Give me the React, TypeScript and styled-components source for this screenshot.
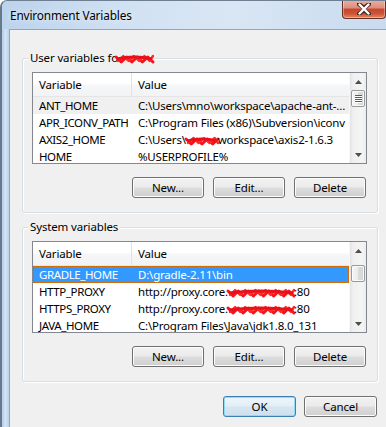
import React from "react";
import styled, { createGlobalStyle, css } from "styled-components";

const GlobalStyle = createGlobalStyle`
  html, body { margin: 0; padding: 0; background: #fff; }
  body {
    font-family: "Noto Sans", "Open Sans", sans-serif;
    font-size: 11.5px;
    letter-spacing: -0.15px;
    color: #000;
  }
  * { box-sizing: border-box; }
`;

const Window = styled.div`
  width: 386px;
  height: 427px;
  display: flex;
  flex-direction: column;
  overflow: hidden;
  border-top: 1px solid #6f7f92;
  border-left: 2px solid #68778a;
  border-top-left-radius: 7px;
  background: linear-gradient(180deg, #cfe0f3 0%, #bfd5ee 40%, #b4cce8 100%);
`;

const TitleBar = styled.div`
  height: 28px;
  display: flex;
  align-items: center;
  padding-left: 8px;
  background: linear-gradient(90deg, #bcd3ec 0%, #d2e2f3 35%, #d9e6f4 60%, #c8dbef 100%);
`;

const Title = styled.span`
  font-size: 11.8px;
  color: #000;
  text-shadow: 0 0 6px rgba(255, 255, 255, 0.9);
`;

const CloseButton = styled.div`
  margin-left: auto;
  align-self: flex-start;
  margin-top: -1px;
  width: 44px;
  height: 19px;
  display: flex;
  align-items: center;
  justify-content: center;
  border: 1px solid #6a2e25;
  border-top: none;
  border-radius: 0 0 4px 4px;
  background: linear-gradient(180deg, #eab0a3 0%, #dc8d7b 45%, #c5472d 50%, #cc5236 75%, #e0895f 100%);
  box-shadow: inset 0 0 0 1px rgba(255, 255, 255, 0.35);
`;

const Body = styled.div`
  flex: 1;
  display: flex;
`;

const SideFrame = styled.div`
  width: 7px;
  background: linear-gradient(90deg, #b3cbe7 0%, #d3e3f4 50%, #bad0ea 100%);
`;

const Client = styled.div`
  flex: 1;
  display: flex;
  flex-direction: column;
  background: #f0f0f0;
  border-top: 1px solid #93a5ba;
  border-left: 1px solid #93a5ba;
  padding-top: 28px;
`;

const Group = styled.div<{ $gap?: number }>`
  position: relative;
  width: 356px;
  margin-left: 12px;
  margin-top: ${(p) => p.$gap ?? 0}px;
  border: 1px solid #d5dfe5;
  border-radius: 3px;
  padding: 13px 10px 14px 9px;
  box-shadow: inset 1px 1px 0 #fff, 1px 1px 0 #fff;
`;

const Legend = styled.span`
  position: absolute;
  top: -9px;
  left: 5px;
  padding: 0 2px;
  line-height: 15px;
  background: #f0f0f0;
  white-space: nowrap;
`;

const List = styled.div`
  height: 92px;
  display: flex;
  border: 1px solid #828790;
  background: #fff;
  overflow: hidden;
`;

const ListBody = styled.div`
  flex: 1;
  min-width: 0;
  display: flex;
  flex-direction: column;
`;

const HeaderRow = styled.div`
  display: grid;
  grid-template-columns: 99px 1fr;
  height: 24px;
  flex-shrink: 0;
  border-bottom: 1px solid #e5e5e5;
  background: linear-gradient(180deg, #ffffff 0%, #ffffff 45%, #f5f6f7 55%, #f2f3f5 100%);
`;

const HeaderCell = styled.div`
  display: flex;
  align-items: center;
  padding-left: 6px;
  &:first-child { border-right: 1px solid #dfe3e8; }
`;

const Row = styled.div<{ $sel?: "active" | "inactive" }>`
  display: grid;
  grid-template-columns: 99px 1fr;
  height: 17px;
  line-height: 17px;
  flex-shrink: 0;
  ${(p) =>
    p.$sel === "inactive" &&
    css`
      background: #f0f0f0;
    `}
  ${(p) =>
    p.$sel === "active" &&
    css`
      background: #3399ff;
      color: #fff;
      outline: 1px dotted #cc6600;
      outline-offset: -1px;
    `}
`;

const Cell = styled.div<{ $name?: boolean }>`
  padding-left: 6px;
  padding-right: 3px;
  white-space: nowrap;
  overflow: hidden;
  text-overflow: ${(p) => (p.$name ? "clip" : "ellipsis")};
  letter-spacing: ${(p) => (p.$name ? "-0.4px" : "-0.2px")};
`;

const ScrollBar = styled.div`
  width: 17px;
  display: flex;
  flex-direction: column;
  background: linear-gradient(90deg, #e3e3e3 0%, #f0f0f0 20%, #f4f4f4 80%, #ebebeb 100%);
  border-left: 1px solid #f7f7f7;
`;

const ArrowBox = styled.div`
  height: 17px;
  display: flex;
  align-items: center;
  justify-content: center;
  flex-shrink: 0;
`;

const Track = styled.div`
  flex: 1;
`;

const Thumb = styled.div<{ $grip?: boolean }>`
  height: 17px;
  margin: 0 1px;
  border: 1px solid #9a9a9a;
  border-radius: 2px;
  background: linear-gradient(90deg, #f5f5f5 0%, #ececec 50%, #dcdcdc 51%, #d4d4d4 100%);
  box-shadow: inset 0 0 0 1px #fafafa;
  display: flex;
  flex-direction: column;
  align-items: center;
  justify-content: center;
  gap: 1px;
  & > i {
    display: ${(p) => (p.$grip ? "block" : "none")};
    width: 7px;
    height: 1px;
    background: #5d5d5d;
    box-shadow: 0 1px 0 #fff;
  }
`;

const ButtonRow = styled.div`
  display: flex;
  justify-content: flex-end;
  gap: 9px;
  margin-top: 13px;
  padding-right: 1px;
`;

const Button = styled.button<{ $w?: number; $default?: boolean }>`
  width: ${(p) => p.$w ?? 72}px;
  height: 21px;
  padding: 0;
  font-family: inherit;
  font-size: 11.5px;
  letter-spacing: -0.15px;
  color: #000;
  border: 1px solid #707070;
  border-radius: 3px;
  background: linear-gradient(180deg, #f2f2f2 0%, #ebebeb 48%, #dddddd 52%, #cfcfcf 100%);
  box-shadow: inset 0 0 0 1px #fcfcfc;
  ${(p) =>
    p.$default &&
    css`
      border-color: #3c7fb1;
      background: linear-gradient(180deg, #eef6fb 0%, #e3eef7 48%, #d6e6f2 52%, #cfe0ee 100%);
      box-shadow: inset 0 0 0 1px #8fdcf7;
    `}
`;

const Footer = styled.div`
  display: flex;
  justify-content: flex-end;
  gap: 8px;
  margin-top: 14px;
  padding-right: 9px;
`;

const ScribbleSvg = styled.svg`
  display: inline-block;
  vertical-align: middle;
  overflow: visible;
`;

const Scribble = ({ w, ml = 0 }: { w: number; ml?: number }) => {
  const n = Math.max(4, Math.round(w / 5));
  let d = "";
  for (let i = 0; i <= n; i++) {
    const x = (i * w) / n;
    const y = i % 2 === 0 ? 4 : 9;
    d += (i === 0 ? "M" : "L") + x.toFixed(1) + " " + y + " ";
  }
  let d2 = "";
  for (let i = 0; i <= n; i++) {
    const x = (i * w) / n + 2;
    const y = i % 2 === 0 ? 8 : 3;
    d2 += (i === 0 ? "M" : "L") + Math.min(x, w).toFixed(1) + " " + y + " ";
  }
  return (
    <ScribbleSvg width={w} height={12} viewBox={`0 0 ${w} 12`} style={{ marginLeft: ml }}>
      <path d={d} fill="none" stroke="#f4141a" strokeWidth={3} strokeLinejoin="round" strokeLinecap="round" />
      <path d={d2} fill="none" stroke="#ff2a2a" strokeWidth={2.4} strokeLinejoin="round" strokeLinecap="round" />
      <path d={`M1 6 Q ${w / 2} 2 ${w - 1} 6`} fill="none" stroke="#e8101a" strokeWidth={3} />
    </ScribbleSvg>
  );
};

const Arrow = ({ up }: { up?: boolean }) => (
  <svg width="7" height="4" viewBox="0 0 7 4">
    <path d={up ? "M0 4 L3.5 0 L7 4 Z" : "M0 0 L3.5 4 L7 0 Z"} fill="#4d4d4d" />
  </svg>
);

type Item = { name: string; value: React.ReactNode; sel?: "active" | "inactive" };

const VarList = ({ items, thumbOffset, grip }: { items: Item[]; thumbOffset: number; grip?: boolean }) => (
  <List>
    <ListBody>
      <HeaderRow>
        <HeaderCell>Variable</HeaderCell>
        <HeaderCell>Value</HeaderCell>
      </HeaderRow>
      {items.map((it) => (
        <Row key={it.name} $sel={it.sel}>
          <Cell $name>{it.name}</Cell>
          <Cell>{it.value}</Cell>
        </Row>
      ))}
    </ListBody>
    <ScrollBar>
      <ArrowBox>
        <Arrow up />
      </ArrowBox>
      <Track>
        <Thumb $grip={grip} style={{ marginTop: thumbOffset }}>
          <i />
          <i />
          <i />
          <i />
        </Thumb>
      </Track>
      <ArrowBox>
        <Arrow />
      </ArrowBox>
    </ScrollBar>
  </List>
);

const userVars: Item[] = [
  { name: "ANT_HOME", value: "C:\\Users\\mno\\workspace\\apache-ant-1.9.4", sel: "inactive" },
  { name: "APR_ICONV_PATH", value: "C:\\Program Files (x86)\\Subversion\\iconv" },
  {
    name: "AXIS2_HOME",
    value: (
      <>
        C:\Users\
        <Scribble w={32} />
        workspace\axis2-1.6.3
      </>
    ),
  },
  { name: "HOME", value: "%USERPROFILE%" },
];

const sysVars: Item[] = [
  { name: "GRADLE_HOME", value: "D:\\gradle-2.11\\bin", sel: "active" },
  {
    name: "HTTP_PROXY",
    value: (
      <>
        http://proxy.core.
        <Scribble w={66} />
        :80
      </>
    ),
  },
  {
    name: "HTTPS_PROXY",
    value: (
      <>
        http://proxy.core.
        <Scribble w={66} />
        :80
      </>
    ),
  },
  { name: "JAVA_HOME", value: "C:\\Program Files\\Java\\jdk1.8.0_131" },
];

export default function App() {
  return (
    <>
      <GlobalStyle />
      <Window>
        <TitleBar>
          <Title>Environment Variables</Title>
          <CloseButton>
            <svg width="14" height="12" viewBox="0 0 14 12">
              <path
                d="M2 1 L7 5 L12 1 M2 11 L7 7 L12 11"
                fill="none"
                stroke="#4a2a26"
                strokeWidth="4.2"
                strokeLinecap="round"
              />
              <path d="M2.5 1.5 L11.5 10.5 M11.5 1.5 L2.5 10.5" stroke="#fff" strokeWidth="2.4" strokeLinecap="round" />
            </svg>
          </CloseButton>
        </TitleBar>
        <Body>
          <SideFrame />
          <Client>
            <Group>
              <Legend>
                User variables fo
                <Scribble w={37} ml={-2} />
              </Legend>
              <VarList items={userVars} thumbOffset={0} grip />
              <ButtonRow>
                <Button>New...</Button>
                <Button>Edit...</Button>
                <Button>Delete</Button>
              </ButtonRow>
            </Group>
            <Group $gap={14}>
              <Legend>System variables</Legend>
              <VarList items={sysVars} thumbOffset={6} />
              <ButtonRow>
                <Button>New...</Button>
                <Button>Edit...</Button>
                <Button>Delete</Button>
              </ButtonRow>
            </Group>
            <Footer>
              <Button $w={73} $default>
                OK
              </Button>
              <Button $w={73}>Cancel</Button>
            </Footer>
          </Client>
        </Body>
      </Window>
    </>
  );
}
